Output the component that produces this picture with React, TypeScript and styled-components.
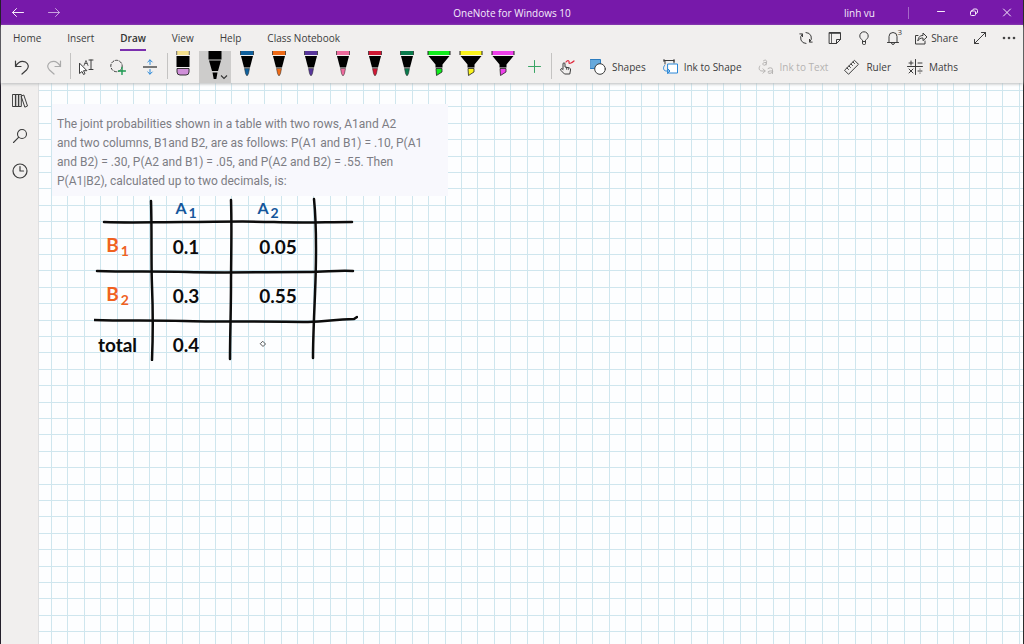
import React from 'react';
import styled, { createGlobalStyle, css } from 'styled-components';

const GlobalStyle = createGlobalStyle`
  *, *::before, *::after { box-sizing: border-box; }
  body { margin: 0; background: #fdfeff; }
  button { font: inherit; color: inherit; background: none; border: 0; padding: 0; margin: 0; }
`;

const Window = styled.div`
  display: flex;
  flex-direction: column;
  min-height: 100vh;
  border-left: 1px solid #241f2b;
  border-right: 1px solid #2b2b2b;
  font-family: 'Open Sans', 'Noto Sans', sans-serif;
  font-size: 10px;
  line-height: 16px;
  color: #3c3c3c;
`;

const TitleBar = styled.header`
  display: grid;
  grid-template-columns: 1fr auto 1fr;
  align-items: center;
  height: 25px;
  background: #7719aa;
  color: #f6ecfa;
`;

const NavButtons = styled.div`
  display: flex;
  gap: 22px;
  padding-left: 10px;
`;

const NavButton = styled.button<{ $dim?: boolean }>`
  display: flex;
  opacity: ${(p) => (p.$dim ? 0.65 : 1)};
`;

const Title = styled.h1`
  margin: 0;
  font-size: 10px;
  font-weight: 400;
`;

const WindowControls = styled.div`
  display: flex;
  align-items: center;
  justify-content: flex-end;
`;

const Account = styled.span`
  padding-right: 33px;
  margin-right: 15px;
  line-height: 12px;
  border-right: 1px solid #a668c8;
`;

const ControlButton = styled.button`
  display: flex;
  align-items: center;
  justify-content: center;
  width: 33px;
  height: 24px;
`;

const Ribbon = styled.div`
  position: relative;
  z-index: 1;
  background: #f1efee;
  box-shadow: 0 1px 3px #b9bbbc;
`;

const MenuRow = styled.div`
  display: flex;
  justify-content: space-between;
  height: 26px;
`;

const Tabs = styled.nav`
  display: flex;
  gap: 26px;
  padding-left: 12px;
`;

const Tab = styled.button<{ $active?: boolean }>`
  height: 26px;
  padding-top: 2px;
  border-bottom: 2px solid transparent;
  white-space: nowrap;
  ${(p) =>
    p.$active &&
    css`
      font-weight: 600;
      color: #333;
      border-bottom-color: #7b2fae;
    `}
`;

const Actions = styled.div`
  display: flex;
`;

const ActionButton = styled.button`
  position: relative;
  display: flex;
  align-items: center;
  justify-content: center;
  gap: 3px;
  min-width: 29px;
  height: 26px;
  padding: 0 7px;
`;

const Count = styled.span`
  position: absolute;
  top: 3px;
  right: 5px;
  font-size: 8px;
  line-height: 8px;
`;

const ToolRow = styled.div`
  display: flex;
  height: 32px;
  padding-left: 5px;
`;

const PenTray = styled.div`
  display: flex;
  padding-left: 1px;
`;

const Tool = styled.button<{ $selected?: boolean; $divided?: boolean }>`
  position: relative;
  display: flex;
  justify-content: center;
  align-items: center;
  width: 32px;
  height: 32px;
  background: ${(p) => (p.$selected ? '#cdcccb' : 'transparent')};
  ${(p) =>
    p.$divided &&
    css`
      &::before {
        content: '';
        position: absolute;
        left: 0;
        top: 2px;
        width: 1px;
        height: 26px;
        background: #c4c3c2;
      }
    `}
`;

const LabelledTools = styled.div`
  display: flex;
  gap: 16px;
  padding-left: 7px;
`;

const LabelledTool = styled.button`
  display: flex;
  align-items: center;
  gap: 6px;
  white-space: nowrap;
  &:disabled {
    color: #b5b3b2;
  }
`;

const Body = styled.div`
  display: flex;
  flex: 1;
`;

const Sidebar = styled.nav`
  display: flex;
  flex-direction: column;
  align-items: center;
  width: 38px;
  background: #f1efee;
  border-right: 1px solid #dfdfe0;
`;

const SideButton = styled.button`
  display: flex;
  align-items: center;
  justify-content: center;
  width: 38px;
  height: 35px;
`;

const Canvas = styled.main`
  position: relative;
  flex: 1;
  padding: 21px 13px;
`;

const Paper = styled.svg`
  position: absolute;
  inset: 0;
  width: 100%;
  height: 100%;
`;

const Question = styled.p`
  position: relative;
  max-width: 396px;
  margin: 0;
  padding: 11px 5px 5px;
  background: #f8f8fd;
  font-family: Roboto, sans-serif;
  font-size: 12px;
  line-height: 19px;
  color: #7d7d84;
  white-space: pre-line;
`;

const Ink = styled.div`
  position: relative;
  width: 264px;
  margin-left: 42px;
`;

const InkLines = styled.svg`
  position: absolute;
  left: 0;
  top: 0;
`;

const InkTable = styled.table`
  table-layout: fixed;
  width: 264px;
  border-collapse: collapse;
  font-family: Lato, sans-serif;
  font-size: 19px;
  line-height: 20px;
  font-weight: 700;
  color: #0c0c0c;
  th, td { padding: 0; text-align: center; }
  sub { font-size: 14px; line-height: 1; margin-left: 2px; }
`;

const InkRow = styled.tr<{ $height: number }>`
  height: ${(p) => p.$height}px;
`;

const ColumnName = styled.th`
  && {
    padding-right: 10px;
  }
  font-size: 16px;
  color: #14569b;
`;

const RowName = styled.th<{ $color?: string }>`
  && {
    padding-right: 10px;
  }
  color: ${(p) => p.$color ?? '#0c0c0c'};
`;

const Value = styled.td<{ $shift?: boolean }>`
  && {
    padding-left: ${(p) => (p.$shift ? 10 : 0)}px;
    padding-right: ${(p) => (p.$shift ? 0 : 10)}px;
  }
`;

const strokeProps = {
  fill: 'none',
  stroke: 'currentColor',
  strokeWidth: 1,
  strokeLinecap: 'round' as const,
  strokeLinejoin: 'round' as const,
};

type IconProps = { size?: number; children: React.ReactNode };
const Icon = ({ size = 16, children }: IconProps) => (
  <svg width={size} height={size} viewBox={`0 0 ${size} ${size}`} {...strokeProps} aria-hidden="true">
    {children}
  </svg>
);

const Pen = ({ color }: { color: string }) => (
  <svg width="32" height="32" viewBox="0 0 32 32" aria-hidden="true">
    <rect x="9.5" y="0" width="13" height="4" fill={color} />
    <path d="M9.5 0v4M22.5 0v4" stroke="#222" strokeWidth=".7" />
    <path d="M10 5h12l-3 11.500h-6z" fill="#000" />
    <path d="M13.500 17.500h5l-1 5-1 2h-1l-1-2z" fill={color} stroke="#222" strokeWidth=".5" />
  </svg>
);

const Highlighter = ({ color }: { color: string }) => (
  <svg width="32" height="32" viewBox="0 0 32 32" aria-hidden="true">
    <rect x="5" y="0" width="22" height="4" fill={color} />
    <path d="M5 0v4M27 0v4" stroke="#222" strokeWidth="1" />
    <path d="M5.500 5h21l-7 8.500v3h-7v-3z" fill="#000" />
    <path d="M13 17.500h6v3.500l-5.500 3.500z" fill={color} stroke="#222" strokeWidth=".8" />
  </svg>
);

const Eraser = () => (
  <svg width="32" height="32" viewBox="0 0 32 32" aria-hidden="true">
    <rect x="10" y="0" width="12" height="4" fill="#f4e08c" />
    <path d="M9.700 0v4M22.300 0v4" stroke="#444" strokeWidth=".8" />
    <rect x="9.500" y="5" width="13" height="11" fill="#000" />
    <path d="M10 17.500h12v3.500q0 3-3 3h-6q-3 0-3-3z" fill="#cf8fd8" stroke="#222" strokeWidth=".9" />
  </svg>
);

const SelectedPen = () => (
  <svg width="32" height="32" viewBox="0 0 32 32" aria-hidden="true">
    <path d="M9.500 0h13v8.500h-13zM10 9.500h12l-3 10.500h-6zM13.500 21.500h5l-1.200 6.500h-2.600z" fill="#000" />
    <path d="M22 24.500l3 3 3-3" fill="none" stroke="#333" strokeWidth="1.100" />
  </svg>
);

const penColors: [string, string][] = [
  ['Blue pen', '#10609c'],
  ['Orange pen', '#ee6a16'],
  ['Purple pen', '#58369b'],
  ['Pink pen', '#ee6a9d'],
  ['Red pen', '#d01734'],
  ['Green pen', '#0a7a4c'],
];

const highlighterColors: [string, string][] = [
  ['Green highlighter', '#10ec1c'],
  ['Yellow highlighter', '#fbf41c'],
  ['Magenta highlighter', '#ee3fea'],
];

const App = () => (
  <>
    <GlobalStyle />
    <Window>
      <TitleBar>
        <NavButtons>
          <NavButton aria-label="Back">
            <Icon size={14}><path d="M1.500 6.500h11M5.500 2.500l-4 4 4 4" /></Icon>
          </NavButton>
          <NavButton $dim aria-label="Forward">
            <Icon size={14}><path d="M1.500 6.500h11M8.500 2.500l4 4-4 4" /></Icon>
          </NavButton>
        </NavButtons>
        <Title>OneNote for Windows 10</Title>
        <WindowControls>
          <Account>linh vu</Account>
          <ControlButton aria-label="Minimise">
            <Icon size={10}><path d="M1.500 3.500h7" /></Icon>
          </ControlButton>
          <ControlButton aria-label="Restore">
            <Icon size={10}>
              <rect x="1.500" y="3" width="5" height="4.500" rx="1" />
              <path d="M3.500 2.500q0-1.500 1.500-1.500h2q1.500 0 1.500 1.500v1.500q0 1.500-1.500 1.500" />
            </Icon>
          </ControlButton>
          <ControlButton aria-label="Close">
            <Icon size={10}><path d="M1.500 1l7 7M8.500 1l-7 7" /></Icon>
          </ControlButton>
        </WindowControls>
      </TitleBar>

      <Ribbon>
        <MenuRow>
          <Tabs>
            <Tab>Home</Tab>
            <Tab>Insert</Tab>
            <Tab $active>Draw</Tab>
            <Tab>View</Tab>
            <Tab>Help</Tab>
            <Tab>Class Notebook</Tab>
          </Tabs>
          <Actions>
            <ActionButton aria-label="Sync">
              <Icon size={14}>
                <path d="M7 12.500A5.500 5.500 0 0 1 3.200 3.100M.8 2.900h2.700v2.700M7 1.500a5.500 5.500 0 0 1 3.800 9.400M13.200 11.100h-2.700V8.400" />
              </Icon>
            </ActionButton>
            <ActionButton aria-label="Feed">
              <Icon size={14}>
                <path d="M1.500 1.500h11v7l-4 4h-7zM8.500 12.500v-4h4" />
                <path d="M3.500 1.500v11M1.500 2.500h11" strokeWidth=".8" />
              </Icon>
            </ActionButton>
            <ActionButton aria-label="Tell me what you want to do">
              <Icon size={14}>
                <path d="M5.500 10.500V9.200C4 8 2.800 7 2.800 5a4.200 4.200 0 0 1 8.400 0c0 2-1.200 3-2.700 4.200v3.300q0 1-1 1h-1q-1 0-1-1zM5.500 10.500h3" />
              </Icon>
            </ActionButton>
            <ActionButton aria-label="Notifications">
              <Icon size={14}>
                <path d="M1.500 11.500h11M3 11.500v-6a4 4 0 0 1 8 0v6M5.500 12q0 1.500 1.500 1.500t1.500-1.500" />
              </Icon>
              <Count>3</Count>
            </ActionButton>
            <ActionButton>
              <Icon size={14}>
                <path d="M4 4.500H1.500v8.500h9.500V10M4 9.500c.3-3.500 2-5 5-5V2l4 4-4 3.700V7c-2.500 0-4 .8-5 2.500z" />
              </Icon>
              Share
            </ActionButton>
            <ActionButton aria-label="Full screen">
              <Icon size={14}><path d="M1.500 12.500l11-11M8.500 1.500h4v4M1.500 8.500v4h4" /></Icon>
            </ActionButton>
            <ActionButton aria-label="More">
              <Icon size={14}>
                <g fill="#444" stroke="none">
                  <circle cx="2" cy="7" r="1.300" /><circle cx="7" cy="7" r="1.300" /><circle cx="12" cy="7" r="1.300" />
                </g>
              </Icon>
            </ActionButton>
          </Actions>
        </MenuRow>

        <ToolRow>
          <Tool aria-label="Undo">
            <Icon><path d="M1.500 2v5.500H7M1.500 7.500C4 3 8 1.500 11.500 3c3.500 2 3.500 5.500 1 8l-4.500 4" strokeWidth="1.200" /></Icon>
          </Tool>
          <Tool aria-label="Redo">
            <Icon><path d="M14.500 2v5.500H9M14.500 7.500C12 3 8 1.500 4.500 3 1 5 1 8.500 3.500 11l4.500 4" stroke="#aaa" strokeWidth="1.200" /></Icon>
          </Tool>
          <Tool aria-label="Select objects or type text" $divided>
            <Icon>
              <path d="M1.500 4.500v10l2.500-2 1.500 3 1.500-.8-1.500-3h3z" fill="#fff" />
              <path d="M6 6.500l2-5 2 5M7 4.500h2" strokeWidth=".8" />
              <path d="M11 1h4M11 10.500h4M13 1v9.500" />
            </Icon>
          </Tool>
          <Tool aria-label="Lasso select">
            <Icon>
              <circle cx="6.500" cy="7" r="5.700" strokeDasharray="2.500 1.700" />
              <path d="M12 8.500v7M8.500 12h7" stroke="#1d9a52" strokeWidth="1.400" />
            </Icon>
          </Tool>
          <Tool aria-label="Insert or remove space">
            <Icon>
              <path d="M1 8h14" stroke="#777" strokeWidth="2" strokeLinecap="butt" />
              <path d="M8 5.500V1M5.800 3L8 .8 10.200 3M8 10.500V15M5.800 13L8 15.200l2.200-2.200" stroke="#2b88d8" />
            </Icon>
          </Tool>
          <PenTray>
            <Tool aria-label="Eraser" $divided><Eraser /></Tool>
            <Tool aria-label="Black pen" $selected aria-pressed="true"><SelectedPen /></Tool>
            {penColors.map(([name, color]) => (
              <Tool key={name} aria-label={name}><Pen color={color} /></Tool>
            ))}
            {highlighterColors.map(([name, color]) => (
              <Tool key={name} aria-label={name}><Highlighter color={color} /></Tool>
            ))}
            <Tool aria-label="Add pen">
              <Icon><path d="M7.500 1.500v12M1.500 7.500h12" stroke="#3aa565" /></Icon>
            </Tool>
          </PenTray>
          <Tool aria-label="Draw with mouse or touch" $divided>
            <Icon>
              <path d="M4 10V5q0-1.200 1-1.200T6 5v3l4.500 1q1.300.3 1 2l-.7 4H5.500L2 11.500q-1-1.200 0-1.700t2 .7" />
              <path d="M7.500 8.300v2M9.300 8.700v2" strokeWidth=".8" />
              <path d="M7 3c2-2.500 3.500-1 3 .5s2.500 1 5-1.500" stroke="#e0283c" strokeWidth="1.200" />
            </Icon>
          </Tool>
          <LabelledTools>
            <LabelledTool>
              <Icon>
                <rect x=".5" y=".5" width="10" height="9" fill="#67a9dc" stroke="#2b7cbf" />
                <circle cx="10" cy="10" r="5.300" fill="#fff" />
              </Icon>
              Shapes
            </LabelledTool>
            <LabelledTool>
              <Icon>
                <path d="M2 1.500h10M2 .5v2M12 .5v2M3 2v3M12 2v2" />
                <rect x="6" y="5" width="9.500" height="9" stroke="#2b88d8" fill="#fff" />
                <path d="M2.500 6.500c-2 2.500-1 5.500 2 5.500h3M5.500 9.500L8 12l-2.500 2.500" stroke="#2b88d8" />
              </Icon>
              Ink to Shape
            </LabelledTool>
            <LabelledTool disabled>
              <Icon>
                <path d="M5.500 1.800c2-1.500 3.500-.5 3 1.700L8 6M8.300 3.500C5.500 3 4.500 4.300 5 5.500s2.300 1 3.200-.8M10 9.500c1-1 4.500-1.200 4.500 1v4M14.500 12c-3-.3-4.800.3-4.500 1.500s3.500 1.300 4.500-.5M1.800 7c-1.500 2.500-.5 5 2.200 5h3M5 9.800L7.200 12 5 14.200" />
              </Icon>
              Ink to Text
            </LabelledTool>
            <LabelledTool>
              <Icon>
                <path d="M.8 11L10.500 1.300l4 4L4.800 15zM3 9l1.500 1.500M5 7l1.500 1.500M7 5l1.500 1.500M9 3l1.500 1.500" />
              </Icon>
              Ruler
            </LabelledTool>
            <LabelledTool>
              <Icon>
                <path d="M8.500.5v15M.5 7.500h15M2 4h4M4 2v4M11 4h4M2 10l4 4M6 10l-4 4M11 12h4M13 10v.200M13 14v.200" />
              </Icon>
              Maths
            </LabelledTool>
          </LabelledTools>
        </ToolRow>
      </Ribbon>

      <Body>
        <Sidebar>
          <SideButton aria-label="Notebooks">
            <Icon>
              <path d="M.8 1.500h3v12h-3zM3.800 1.500h3v12h-3zM6.800 1.500h2.500v12H6.800zM9.500 3l2.300-1 3.700 11-2.300 1z" />
            </Icon>
          </SideButton>
          <SideButton aria-label="Search">
            <Icon><circle cx="10" cy="6" r="4.500" strokeWidth="1.100" /><path d="M6.800 9.200L1.500 14.500" strokeWidth="1.100" /></Icon>
          </SideButton>
          <SideButton aria-label="Recent notes">
            <Icon><circle cx="8" cy="8" r="7" strokeWidth="1.200" /><path d="M8 3.500V8h3.500" strokeWidth="1.200" /></Icon>
          </SideButton>
        </Sidebar>

        <Canvas>
          <Paper aria-hidden="true">
            <defs>
              <pattern id="squares" x="12" y="7" width="82" height="82" patternUnits="userSpaceOnUse">
                <rect width="82" height="82" fill="#fdfeff" />
                <g fill="#cfe6ee">
                  {[0, 16, 33, 49, 66].map((at) => (
                    <React.Fragment key={at}>
                      <rect x={at} y="0" width="1" height="82" />
                      <rect x="0" y={at} width="82" height="1" />
                    </React.Fragment>
                  ))}
                </g>
              </pattern>
            </defs>
            <rect width="100%" height="100%" fill="url(#squares)" />
          </Paper>

          <Question>
            {`The joint probabilities shown in a table with two rows, A1and A2
and two columns, B1and B2, are as follows: P(A1 and B1) = .10, P(A1
and B2) = .30, P(A2 and B1) = .05, and P(A2 and B2) = .55. Then
P(A1|B2), calculated up to two decimals, is:`}
          </Question>

          <Ink>
            <InkTable>
              <colgroup>
                <col width="57" /><col width="80" /><col width="84" /><col width="43" />
              </colgroup>
              <thead>
                <InkRow $height={26}>
                  <td />
                  <ColumnName scope="col">A<sub>1</sub></ColumnName>
                  <ColumnName scope="col">A<sub>2</sub></ColumnName>
                  <td />
                </InkRow>
              </thead>
              <tbody>
                <InkRow $height={49}>
                  <RowName scope="row" $color="#f0621f">B<sub>1</sub></RowName>
                  <Value>0.1</Value>
                  <Value $shift>0.05</Value>
                  <td />
                </InkRow>
                <InkRow $height={49}>
                  <RowName scope="row" $color="#f0621f">B<sub>2</sub></RowName>
                  <Value>0.3</Value>
                  <Value $shift>0.55</Value>
                  <td />
                </InkRow>
                <InkRow $height={49}>
                  <RowName scope="row">total</RowName>
                  <Value>0.4</Value>
                  <td />
                  <td />
                </InkRow>
              </tbody>
            </InkTable>
            <InkLines width="264" height="165" viewBox="0 0 264 165" fill="none" stroke="#0c0c0c" strokeWidth="2.500" strokeLinecap="round" aria-hidden="true">
              <path d="M57 5c1 30 0 60 1 85s1 50 0 74" />
              <path d="M137 4c1 30 0 60 0 85s-1 50-1 74" />
              <path d="M220 3c3 30 2 70 1 95s-2 45-2 64" />
              <path d="M10 26c30 1 50 0 80 0s60-1 90 0 50 0 78 0" />
              <path d="M3 75c30 1 60 0 90 1s80 0 120 0c20 0 30-2 46-1" />
              <path d="M0 124c30 1 60 0 90 1s80 0 124 1c20 0 25-3 46-3l3-2" />
              <path d="M169 145.500l2.500 2.500-2.500 2.500-2.500-2.500z" stroke="#555" strokeWidth="1" />
            </InkLines>
          </Ink>
        </Canvas>
      </Body>
    </Window>
  </>
);

export default App;
